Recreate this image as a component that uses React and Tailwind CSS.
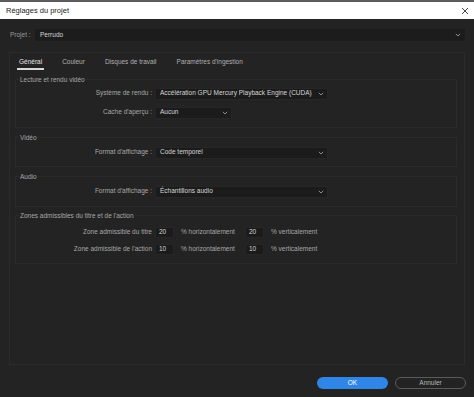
import React from "react";

const font = { fontFamily: '"Liberation Sans", Arial, sans-serif' };

function Chevron() {
  return (
    <svg width="6" height="4" viewBox="0 0 6 4" className="shrink-0">
      <path d="M0.8 0.8 L3 3 L5.2 0.8" fill="none" stroke="#9a9a9a" strokeWidth="0.9" />
    </svg>
  );
}

function Select({ value, width }) {
  return (
    <div className={`ml-[3px] h-[12px] ${width} flex items-center justify-between bg-[#1b1b1b] border border-[#262626] rounded-[1px] pl-[4px] pr-[3px] text-[#d6d6d6]`}>
      <span className="leading-none">{value}</span>
      <Chevron />
    </div>
  );
}

function Row({ label, children, className = "" }) {
  return (
    <div className={`flex items-center ${className}`}>
      <div className="w-[136px] text-right text-[#a8a8a8] leading-none">{label}</div>
      {children}
    </div>
  );
}

function Section({ title, children, className = "" }) {
  return (
    <fieldset className={`border border-[#2b2b2b] ${className}`}>
      <legend className="ml-[3px] px-[1px] text-[#a8a8a8] leading-[8px]">{title}</legend>
      {children}
    </fieldset>
  );
}

function NumBox({ value }) {
  return (
    <div className="h-[11px] w-[19px] bg-[#1b1b1b] border border-[#262626] flex items-center pl-[3px] text-[#d6d6d6] leading-none">
      {value}
    </div>
  );
}

export default function App() {
  const tabs = ["Général", "Couleur", "Disques de travail", "Paramètres d'ingestion"];

  return (
    <div className="w-[474px] h-[397px] bg-[#232323] flex flex-col text-[6.5px] overflow-hidden" style={font}>
      {/* title bar */}
      <div className="border-t-2 border-[#5c5c5c] bg-white h-[19px] flex items-center justify-between pl-[6px] pr-[5px] shrink-0">
        <span className="text-[7.5px] text-[#1a1a1a]">Réglages du projet</span>
        <svg width="8" height="8" viewBox="0 0 8 8">
          <path d="M1 1 L7 7 M7 1 L1 7" stroke="#333" strokeWidth="0.9" />
        </svg>
      </div>

      {/* projet */}
      <div className="mt-[10px] flex items-center pl-[10px] pr-[9px] shrink-0">
        <span className="w-[25px] text-[#9a9a9a] leading-none">Projet :</span>
        <div className="flex-1 h-[12px] bg-[#1c1c1c] flex items-center justify-between pl-[5px] pr-[4px] text-[#d6d6d6]">
          <span className="leading-none">Perrudo</span>
          <Chevron />
        </div>
      </div>

      {/* panel */}
      <div className="mt-[11px] mx-[9px] h-[313px] border border-[#2b2b2b] flex flex-col shrink-0">
        <div className="flex gap-[16px] pl-[7px] pt-[5px] text-[#b0b0b0]">
          {tabs.map((t, i) => (
            <div key={t} className="flex flex-col items-center">
              <span className={`leading-[8px] px-[2px] ${i === 0 ? "text-[#e4e4e4]" : ""}`}>{t}</span>
              <div className={`mt-[2px] h-[1.5px] w-full ${i === 0 ? "bg-[#d8d8d8]" : "bg-transparent"}`} />
            </div>
          ))}
        </div>

        <div className="flex flex-col pl-[5px] pr-[7px] mt-[6px]">
          <Section title="Lecture et rendu vidéo" className="pt-[4px] pb-[8px]">
            <Row label="Système de rendu :">
              <Select value="Accélération GPU Mercury Playback Engine (CUDA)" width="w-[173px]" />
            </Row>
            <Row label="Cache d'aperçu :" className="mt-[7px]">
              <Select value="Aucun" width="w-[77px]" />
            </Row>
          </Section>

          <Section title="Vidéo" className="mt-[6px] pt-[5px] pb-[7px]">
            <Row label="Format d'affichage :">
              <Select value="Code temporel" width="w-[173px]" />
            </Row>
          </Section>

          <Section title="Audio" className="mt-[6px] pt-[5px] pb-[8px]">
            <Row label="Format d'affichage :">
              <Select value="Échantillons audio" width="w-[173px]" />
            </Row>
          </Section>

          <Section title="Zones admissibles du titre et de l'action" className="mt-[5px] pt-[7px] pb-[8px]">
            <Row label="Zone admissible du titre">
              <div className="ml-[3px] flex items-center text-[#a8a8a8]">
                <NumBox value="20" />
                <span className="ml-[7px] w-[64px] leading-none">% horizontalement</span>
                <NumBox value="20" />
                <span className="ml-[7px] leading-none">% verticalement</span>
              </div>
            </Row>
            <Row label="Zone admissible de l'action" className="mt-[6px]">
              <div className="ml-[3px] flex items-center text-[#a8a8a8]">
                <NumBox value="10" />
                <span className="ml-[7px] w-[64px] leading-none">% horizontalement</span>
                <NumBox value="10" />
                <span className="ml-[7px] leading-none">% verticalement</span>
              </div>
            </Row>
          </Section>
        </div>
      </div>

      {/* footer */}
      <div className="flex justify-end gap-[7px] pr-[8px] mt-[12px]">
        <button className="w-[71px] h-[12px] rounded-full bg-[#2f86e6] text-white leading-none flex items-center justify-center">
          OK
        </button>
        <button className="w-[71px] h-[12px] rounded-full border border-[#5a5a5a] text-[#b8b8b8] leading-none flex items-center justify-center">
          Annuler
        </button>
      </div>
    </div>
  );
}
